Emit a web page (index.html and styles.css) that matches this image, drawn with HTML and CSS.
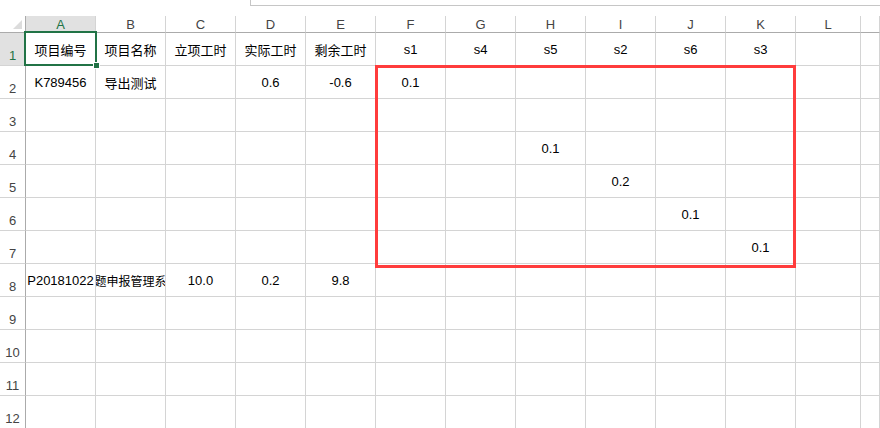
FILE: index.html
```html
<!DOCTYPE html>
<html lang="zh-CN">
<head>
    <meta charset="UTF-8">
    <title>工时统计</title>
    <link rel="stylesheet" href="styles.css">
</head>
<body>
    <div class="topbar">
        <div class="formula-box"></div>
    </div>

    <div class="sheet">
        <!-- 列标题 -->
        <div class="corner">
            <svg width="9" height="9" viewBox="0 0 9 9"><polygon points="9,0 9,9 0,9" fill="#dcdcdc"/></svg>
        </div>
        <div class="col-head active">A</div>
        <div class="col-head">B</div>
        <div class="col-head">C</div>
        <div class="col-head">D</div>
        <div class="col-head">E</div>
        <div class="col-head">F</div>
        <div class="col-head">G</div>
        <div class="col-head">H</div>
        <div class="col-head">I</div>
        <div class="col-head">J</div>
        <div class="col-head">K</div>
        <div class="col-head">L</div>
        <div class="col-head"></div>

        <!-- 1 -->
        <div class="row-head active">1</div>
        <div class="cell">项目编号</div>
        <div class="cell">项目名称</div>
        <div class="cell">立项工时</div>
        <div class="cell">实际工时</div>
        <div class="cell">剩余工时</div>
        <div class="cell">s1</div>
        <div class="cell">s4</div>
        <div class="cell">s5</div>
        <div class="cell">s2</div>
        <div class="cell">s6</div>
        <div class="cell">s3</div>
        <div class="cell"></div>
        <div class="cell"></div>

        <!-- 2 -->
        <div class="row-head">2</div>
        <div class="cell">K789456</div>
        <div class="cell">导出测试</div>
        <div class="cell"></div>
        <div class="cell">0.6</div>
        <div class="cell">-0.6</div>
        <div class="cell">0.1</div>
        <div class="cell"></div>
        <div class="cell"></div>
        <div class="cell"></div>
        <div class="cell"></div>
        <div class="cell"></div>
        <div class="cell"></div>
        <div class="cell"></div>

        <!-- 3 -->
        <div class="row-head">3</div>
        <div class="cell"></div>
        <div class="cell"></div>
        <div class="cell"></div>
        <div class="cell"></div>
        <div class="cell"></div>
        <div class="cell"></div>
        <div class="cell"></div>
        <div class="cell"></div>
        <div class="cell"></div>
        <div class="cell"></div>
        <div class="cell"></div>
        <div class="cell"></div>
        <div class="cell"></div>

        <!-- 4 -->
        <div class="row-head">4</div>
        <div class="cell"></div>
        <div class="cell"></div>
        <div class="cell"></div>
        <div class="cell"></div>
        <div class="cell"></div>
        <div class="cell"></div>
        <div class="cell"></div>
        <div class="cell">0.1</div>
        <div class="cell"></div>
        <div class="cell"></div>
        <div class="cell"></div>
        <div class="cell"></div>
        <div class="cell"></div>

        <!-- 5 -->
        <div class="row-head">5</div>
        <div class="cell"></div>
        <div class="cell"></div>
        <div class="cell"></div>
        <div class="cell"></div>
        <div class="cell"></div>
        <div class="cell"></div>
        <div class="cell"></div>
        <div class="cell"></div>
        <div class="cell">0.2</div>
        <div class="cell"></div>
        <div class="cell"></div>
        <div class="cell"></div>
        <div class="cell"></div>

        <!-- 6 -->
        <div class="row-head">6</div>
        <div class="cell"></div>
        <div class="cell"></div>
        <div class="cell"></div>
        <div class="cell"></div>
        <div class="cell"></div>
        <div class="cell"></div>
        <div class="cell"></div>
        <div class="cell"></div>
        <div class="cell"></div>
        <div class="cell">0.1</div>
        <div class="cell"></div>
        <div class="cell"></div>
        <div class="cell"></div>

        <!-- 7 -->
        <div class="row-head">7</div>
        <div class="cell"></div>
        <div class="cell"></div>
        <div class="cell"></div>
        <div class="cell"></div>
        <div class="cell"></div>
        <div class="cell"></div>
        <div class="cell"></div>
        <div class="cell"></div>
        <div class="cell"></div>
        <div class="cell"></div>
        <div class="cell">0.1</div>
        <div class="cell"></div>
        <div class="cell"></div>

        <!-- 8 -->
        <div class="row-head">8</div>
        <div class="cell">P20181022</div>
        <div class="cell"><span class="clip">课题申报管理系统</span></div>
        <div class="cell">10.0</div>
        <div class="cell">0.2</div>
        <div class="cell">9.8</div>
        <div class="cell"></div>
        <div class="cell"></div>
        <div class="cell"></div>
        <div class="cell"></div>
        <div class="cell"></div>
        <div class="cell"></div>
        <div class="cell"></div>
        <div class="cell"></div>

        <!-- 9 -->
        <div class="row-head">9</div>
        <div class="cell"></div>
        <div class="cell"></div>
        <div class="cell"></div>
        <div class="cell"></div>
        <div class="cell"></div>
        <div class="cell"></div>
        <div class="cell"></div>
        <div class="cell"></div>
        <div class="cell"></div>
        <div class="cell"></div>
        <div class="cell"></div>
        <div class="cell"></div>
        <div class="cell"></div>

        <!-- 10 -->
        <div class="row-head">10</div>
        <div class="cell"></div>
        <div class="cell"></div>
        <div class="cell"></div>
        <div class="cell"></div>
        <div class="cell"></div>
        <div class="cell"></div>
        <div class="cell"></div>
        <div class="cell"></div>
        <div class="cell"></div>
        <div class="cell"></div>
        <div class="cell"></div>
        <div class="cell"></div>
        <div class="cell"></div>

        <!-- 11 -->
        <div class="row-head">11</div>
        <div class="cell"></div>
        <div class="cell"></div>
        <div class="cell"></div>
        <div class="cell"></div>
        <div class="cell"></div>
        <div class="cell"></div>
        <div class="cell"></div>
        <div class="cell"></div>
        <div class="cell"></div>
        <div class="cell"></div>
        <div class="cell"></div>
        <div class="cell"></div>
        <div class="cell"></div>

        <!-- 12 -->
        <div class="row-head">12</div>
        <div class="cell"></div>
        <div class="cell"></div>
        <div class="cell"></div>
        <div class="cell"></div>
        <div class="cell"></div>
        <div class="cell"></div>
        <div class="cell"></div>
        <div class="cell"></div>
        <div class="cell"></div>
        <div class="cell"></div>
        <div class="cell"></div>
        <div class="cell"></div>
        <div class="cell"></div>

        <!-- 选中单元格 / 标注框 -->
        <div class="selection"><div class="fill-handle"></div></div>
        <div class="highlight-box"></div>
    </div>
</body>
</html>
```

FILE: styles.css
```css
body {
    margin: 0;
    background: #fff;
    font-family: "Liberation Sans", Arial, "Noto Sans CJK SC", sans-serif;
    font-size: 13px;
    color: #000;
    overflow: hidden;
}
.topbar {
    height: 16px;
    display: flex;
}
.formula-box {
    margin-left: 250px;
    flex: 1;
    height: 5px;
    border-left: 1px solid #c6c6c6;
    border-bottom: 1px solid #c6c6c6;
}
.sheet {
    position: relative;
    display: grid;
    grid-template-columns: 26px repeat(11, 70px) 65px 1fr;
    grid-template-rows: 17px repeat(12, 33px);
}
.corner {
    border-right: 1px solid #ababab;
    border-bottom: 1px solid #ababab;
    display: flex;
    align-items: flex-end;
    justify-content: flex-end;
    padding: 0 3px 3px 0;
}
.col-head {
    border-right: 1px solid #d4d4d4;
    border-bottom: 1px solid #ababab;
    display: flex;
    align-items: center;
    justify-content: center;
    color: #444;
}
.row-head {
    border-right: 1px solid #ababab;
    border-bottom: 1px solid #d4d4d4;
    display: flex;
    align-items: flex-end;
    justify-content: center;
    padding-bottom: 2px;
    color: #444;
}
.col-head.active,
.row-head.active {
    background: #e1e1e1;
    color: #217346;
}
.cell {
    border-right: 1px solid #d4d4d4;
    border-bottom: 1px solid #d4d4d4;
    display: flex;
    align-items: center;
    justify-content: center;
    overflow: hidden;
    white-space: nowrap;
}
.cell .clip {
    flex: none;
    font-size: 12px;
}
.selection {
    position: absolute;
    left: 24px;
    top: 15px;
    width: 69px;
    height: 31px;
    border: 2px solid #217346;
}
.fill-handle {
    position: absolute;
    right: -5px;
    bottom: -5px;
    width: 5px;
    height: 5px;
    background: #217346;
    border: 1px solid #fff;
}
.highlight-box {
    position: absolute;
    left: 375px;
    top: 49px;
    width: 415px;
    height: 197px;
    border: 3px solid #ff3c3c;
}
```
